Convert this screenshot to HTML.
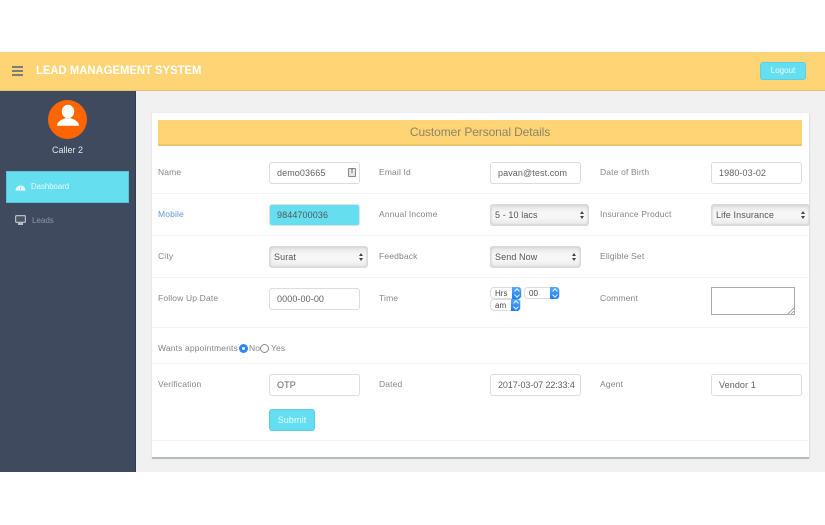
<!DOCTYPE html>
<html>
<head>
<meta charset="utf-8">
<style>
html,body{margin:0;padding:0;background:#fff;}
body{width:825px;height:525px;position:relative;overflow:hidden;font-family:"Liberation Sans",sans-serif;}
div,span{position:absolute;box-sizing:border-box;white-space:nowrap;}
.lbl{font-size:8.5px;color:#858585;line-height:12px;height:12px;letter-spacing:.15px;}
.inp{width:91px;height:22px;background:#fff;border:1px solid #dcdcdc;border-radius:3px;font-size:9px;color:#606060;line-height:21px;padding-left:7px;letter-spacing:.1px;}
.sel{height:22px;border:1px solid #dadada;border-radius:3px;background:linear-gradient(#e2e2e2,#f6f6f6 35%,#f6f6f6 65%,#e8e8e8);box-shadow:inset 0 0 2px #c2c2c2;font-size:9px;color:#555;line-height:21px;padding-left:4px;letter-spacing:.1px;}
.sel:after{content:"";position:absolute;right:4px;top:6px;width:0;height:0;border-left:2px solid transparent;border-right:2px solid transparent;border-bottom:3px solid #444;}
.sel:before{content:"";position:absolute;right:4px;top:11px;width:0;height:0;border-left:2px solid transparent;border-right:2px solid transparent;border-top:3px solid #444;}
.sep{left:152px;width:657px;height:1px;background:#f1f3f6;}
.mini{height:12px;background:#fff;border:1px solid #dcdcdc;border-radius:4px;font-size:8px;color:#444;line-height:11px;padding-left:4px;}
.mini i{position:absolute;right:0;top:-1px;width:9px;height:12px;background:linear-gradient(#5aa6f8,#1f7cf0);border-radius:0 3px 3px 0;}
.mini i:before{content:"";position:absolute;left:3px;top:2px;width:3px;height:3px;border-left:1px solid #dff;border-top:1px solid #dff;transform:rotate(45deg);}
.mini i:after{content:"";position:absolute;left:3px;top:6px;width:3px;height:3px;border-right:1px solid #dff;border-bottom:1px solid #dff;transform:rotate(45deg);}
</style>
</head>
<body>
<div style="left:0;top:52px;width:825px;height:39px;background:#ffd474;border-bottom:1px solid #e3c06e;"></div>
<div style="left:12px;top:66px;width:11px;height:2px;background:#7f7d74;"></div>
<div style="left:12px;top:70px;width:11px;height:2px;background:#7f7d74;"></div>
<div style="left:12px;top:74px;width:11px;height:2px;background:#7f7d74;"></div>
<div style="left:36px;top:63px;font-size:12px;font-weight:bold;color:#fff;line-height:14px;transform:scaleX(.94);transform-origin:left center;">LEAD MANAGEMENT SYSTEM</div>
<div style="left:760px;top:62px;width:46px;height:18px;background:#65dff0;border:1px solid #5ccfe0;border-radius:3px;color:#e8fbfd;font-size:8px;line-height:16px;text-align:center;">Logout</div>

<div style="left:0;top:91px;width:825px;height:381px;background:#f1f1f1;"></div>
<div style="left:0;top:91px;width:136px;height:381px;background:#3f4a5e;border-right:1px solid #333c4c;"></div>

<div style="left:48px;top:100px;width:39px;height:39px;border-radius:50%;background:#ff6600;"></div>
<svg style="position:absolute;left:48px;top:100px" width="39" height="39" viewBox="0 0 39 39"><ellipse cx="20" cy="11.5" rx="6.2" ry="6.8" fill="#fff"/><path d="M9 25.7c0-4 4-6 8-7.5h6c4 1.5 8 3.5 8 7.5z" fill="#fff"/></svg>
<div style="left:0;top:144px;width:135px;text-align:center;font-size:9px;color:#e6e6e6;line-height:12px;">Caller 2</div>

<div style="left:6px;top:171px;width:123px;height:32px;background:#65dff0;border:1px solid #58c6d8;"></div>
<svg style="position:absolute;left:15px;top:181px" width="11" height="11" viewBox="0 0 11 11"><path d="M.5 9.5a5 5 0 1 1 10 0z" fill="#fff"/><path d="M5.5 9l.6-4M2.5 7h1M7.5 7h1M5.5 2.5v1" stroke="#65dff0" stroke-width=".9"/></svg>
<div style="left:31px;top:181px;font-size:7.8px;color:#e8fbfd;line-height:12px;">Dashboard</div>
<svg style="position:absolute;left:15px;top:214px" width="11" height="12" viewBox="0 0 11 12"><rect x=".6" y="1.6" width="9.8" height="6.8" rx="1" fill="#4a5568" stroke="#b9bdc4" stroke-width="1.2"/><rect x="3" y="9" width="5" height="2" fill="#b9bdc4"/></svg>
<div style="left:32px;top:215px;font-size:8px;color:#8f96a3;line-height:12px;">Leads</div>

<div style="left:152px;top:113px;width:657px;height:346px;background:#fff;border-bottom:2px solid #b4bac4;box-shadow:1px 0 1px #ddd,-1px 0 1px #e6e6e6;"></div>
<div style="left:158px;top:120px;width:644px;height:26px;background:#ffd474;border-bottom:2px solid #edc46f;text-align:center;font-size:12px;color:#8c8468;line-height:24px;letter-spacing:-.1px;">Customer Personal Details</div>

<div class="sep" style="top:193px"></div>
<div class="sep" style="top:235px"></div>
<div class="sep" style="top:277px"></div>
<div class="sep" style="top:327px"></div>
<div class="sep" style="top:363px"></div>
<div class="sep" style="top:440px"></div>

<div class="lbl" style="left:158px;top:166px">Name</div>
<div class="inp" style="left:269px;top:162px">demo03665</div>
<div style="left:348px;top:168px;width:8px;height:9px;border:1px solid #888;border-radius:1px;background:#e6e6e6;font-size:6px;font-weight:bold;line-height:7px;text-align:center;color:#444;">!</div>
<div class="lbl" style="left:379px;top:166px">Email Id</div>
<div class="inp" style="left:490px;top:162px">pavan@test.com</div>
<div class="lbl" style="left:600px;top:166px">Date of Birth</div>
<div class="inp" style="left:711px;top:162px">1980-03-02</div>

<div class="lbl" style="left:158px;top:208px;color:#5b9bd5">Mobile</div>
<div class="inp" style="left:269px;top:204px;background:#65dff0;border-color:#d8e4e8;color:#555">9844700036</div>
<div class="lbl" style="left:379px;top:208px">Annual Income</div>
<div class="sel" style="left:490px;top:204px;width:99px">5 - 10 lacs</div>
<div class="lbl" style="left:600px;top:208px">Insurance Product</div>
<div class="sel" style="left:711px;top:204px;width:99px">Life Insurance</div>

<div class="lbl" style="left:158px;top:250px">City</div>
<div class="sel" style="left:269px;top:246px;width:99px">Surat</div>
<div class="lbl" style="left:379px;top:250px">Feedback</div>
<div class="sel" style="left:490px;top:246px;width:91px">Send Now</div>
<div class="lbl" style="left:600px;top:250px">Eligible Set</div>

<div class="lbl" style="left:158px;top:292px">Follow Up Date</div>
<div class="inp" style="left:269px;top:288px">0000-00-00</div>
<div class="lbl" style="left:379px;top:292px">Time</div>
<div class="mini" style="left:490px;top:287px;width:32px">Hrs<i></i></div>
<div class="mini" style="left:524px;top:287px;width:36px">00<i></i></div>
<div class="mini" style="left:490px;top:299px;width:31px">am<i></i></div>
<div class="lbl" style="left:600px;top:292px">Comment</div>
<div style="left:711px;top:287px;width:84px;height:28px;background:#fff;border:1px solid #aaa;"></div>
<svg style="position:absolute;left:788px;top:308px" width="6" height="6" viewBox="0 0 6 6"><path d="M0 6L6 0M3 6L6 3" stroke="#999" stroke-width=".8"/></svg>

<div class="lbl" style="left:158px;top:342px">Wants appointments</div>
<div style="left:239px;top:344px;width:9px;height:9px;border-radius:50%;background:#2f86f0;"></div>
<div style="left:242px;top:347px;width:3px;height:3px;border-radius:50%;background:#fff;"></div>
<div class="lbl" style="left:249px;top:342px">No</div>
<div style="left:260px;top:344px;width:9px;height:9px;border-radius:50%;background:#fff;border:1px solid #888;"></div>
<div class="lbl" style="left:271px;top:342px">Yes</div>

<div class="lbl" style="left:158px;top:378px">Verification</div>
<div class="inp" style="left:269px;top:374px">OTP</div>
<div class="lbl" style="left:379px;top:378px">Dated</div>
<div class="inp" style="left:490px;top:374px;overflow:hidden;letter-spacing:-.1px;">2017-03-07 22:33:4</div>
<div class="lbl" style="left:600px;top:378px">Agent</div>
<div class="inp" style="left:711px;top:374px">Vendor 1</div>

<div style="left:269px;top:409px;width:46px;height:22px;background:#65dff0;border:1px solid #55cfe0;border-radius:3px;color:#e8fbfd;font-size:9px;line-height:21px;text-align:center;letter-spacing:.1px;">Submit</div>
</body>
</html>
